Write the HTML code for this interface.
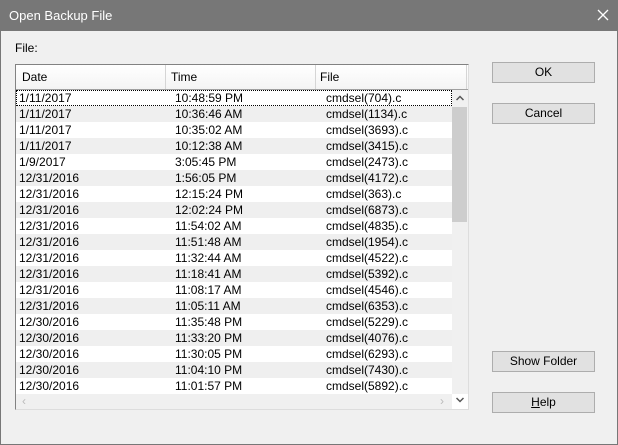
<!DOCTYPE html>
<html><head><style>
*{margin:0;padding:0;box-sizing:border-box}
body{width:618px;height:445px;background:#f0f0f0;font-family:"Liberation Sans",sans-serif;font-size:12px;color:#000;position:relative;overflow:hidden}
.win{position:absolute;left:0;top:0;width:618px;height:445px;border:1px solid #777;border-top:none}
.title{position:absolute;left:0;top:0;width:618px;height:31px;background:#777;color:#fff;font-size:13px;padding:8px 0 0 9px}
.x{position:absolute;left:596px;top:8px;width:14px;height:14px}
.lbl{position:absolute;left:15px;top:41px}
.list{position:absolute;left:15px;top:64px;width:454px;height:346px;border:1px solid #828282;border-right-color:#ddd;border-bottom-color:#ddd;background:#fff;overflow:hidden}
.hdr{position:absolute;left:0;top:0;width:452px;height:25px;background:linear-gradient(#fff,#f4f4f4);border-bottom:1px solid #a0a0a0}
.hdr div{position:absolute;top:0;height:24px;padding:5px 0 0 5px;border-right:1px solid #d5d5d5}
.row{position:absolute;left:0;width:436px;height:16px;line-height:16px}
.row span{position:absolute}
.alt{background:#efefef}
.vs{position:absolute;left:436px;top:25px;width:16px;height:304px;background:#f0f0f0}
.thumb{position:absolute;left:0;top:17px;width:15px;height:115px;background:#cdcdcd}
.hs{position:absolute;left:0;top:329px;width:436px;height:16px;background:#f0f0f0;color:#bbb}
.btn{position:absolute;left:492px;width:103px;height:21px;border:1px solid #adadad;background:#e1e1e1;text-align:center;line-height:19px}
</style></head><body>
<div class="win"></div>
<div class="title">Open Backup File
<svg class="x" viewBox="0 0 14 14"><path d="M2 2L12 12M12 2L2 12" stroke="#fff" stroke-width="1.3"/></svg></div>
<div class="lbl">File:</div>
<div class="list">
<div class="hdr"><div style="left:0;width:150px;padding-left:6px">Date</div><div style="left:150px;width:150px;padding-left:5px">Time</div><div style="left:300px;width:151px;padding-left:4px">File</div></div>
<div id="rows"></div>
<div class="vs"><svg style="position:absolute;left:4px;top:5px" width="8" height="6" viewBox="0 0 8 6"><path d="M0.5 5L4 1.5L7.5 5" stroke="#555" stroke-width="1.5" fill="none"/></svg><div class="thumb"></div><svg style="position:absolute;left:4px;top:307px" width="8" height="6" viewBox="0 0 8 6"><path d="M0.5 1L4 4.5L7.5 1" stroke="#555" stroke-width="1.5" fill="none"/></svg></div>
<div class="hs"><span style="position:absolute;left:6px;top:0">&lsaquo;</span><span style="position:absolute;left:424px;top:0">&rsaquo;</span></div>
</div>
<div class="btn" style="top:62px">OK</div>
<div class="btn" style="top:103px">Cancel</div>
<div class="btn" style="top:351px">Show Folder</div>
<div class="btn" style="top:392px"><u>H</u>elp</div>
<script>
var d=[["1/11/2017","10:48:59 PM","cmdsel(704).c"],["1/11/2017","10:36:46 AM","cmdsel(1134).c"],["1/11/2017","10:35:02 AM","cmdsel(3693).c"],["1/11/2017","10:12:38 AM","cmdsel(3415).c"],["1/9/2017","3:05:45 PM","cmdsel(2473).c"],["12/31/2016","1:56:05 PM","cmdsel(4172).c"],["12/31/2016","12:15:24 PM","cmdsel(363).c"],["12/31/2016","12:02:24 PM","cmdsel(6873).c"],["12/31/2016","11:54:02 AM","cmdsel(4835).c"],["12/31/2016","11:51:48 AM","cmdsel(1954).c"],["12/31/2016","11:32:44 AM","cmdsel(4522).c"],["12/31/2016","11:18:41 AM","cmdsel(5392).c"],["12/31/2016","11:08:17 AM","cmdsel(4546).c"],["12/31/2016","11:05:11 AM","cmdsel(6353).c"],["12/30/2016","11:35:48 PM","cmdsel(5229).c"],["12/30/2016","11:33:20 PM","cmdsel(4076).c"],["12/30/2016","11:30:05 PM","cmdsel(6293).c"],["12/30/2016","11:04:10 PM","cmdsel(7430).c"],["12/30/2016","11:01:57 PM","cmdsel(5892).c"]];
var h="";d.forEach(function(r,i){h+='<div class="row'+(i%2?' alt':'')+'" style="top:'+(25+i*16)+'px'+(i==0?';outline:1px dotted #000;outline-offset:-1px':'')+'"><span style="left:3px">'+r[0]+'</span><span style="left:159px">'+r[1]+'</span><span style="left:310px">'+r[2]+'</span></div>'});
document.getElementById("rows").innerHTML=h;
</script>
</body></html>
